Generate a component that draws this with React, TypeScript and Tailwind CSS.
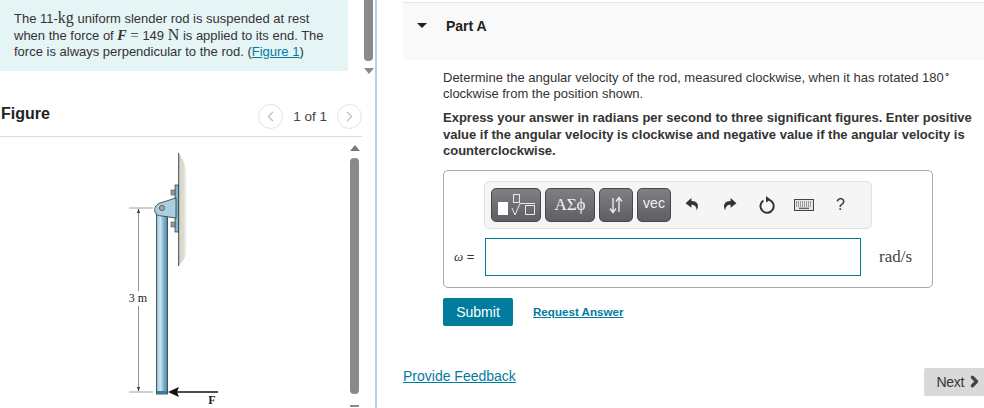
import { ChevronLeft, ChevronRight } from 'lucide-react';

const serif = "font-['Liberation_Serif',serif]";

function RodFigure() {
  return (
    <svg width="120" height="262" viewBox="120 146 120 262" className="block" aria-hidden="true">
      <defs>
        <linearGradient id="rod" x1="0" x2="1" y1="0" y2="0">
          <stop offset="0" stopColor="#8fc0d6" />
          <stop offset="0.35" stopColor="#cfe6ef" />
          <stop offset="0.65" stopColor="#7fb4cd" />
          <stop offset="1" stopColor="#3e8ba9" />
        </linearGradient>
        <linearGradient id="wall" x1="0" x2="1" y1="0" y2="0">
          <stop offset="0" stopColor="#d4d4c8" />
          <stop offset="0.6" stopColor="#dcdcd2" />
          <stop offset="1" stopColor="#ffffff" />
        </linearGradient>
      </defs>
      {/* wall */}
      <path d="M179 154 C184 160 187 168 187 180 L187 245 C187 255 184 261 179 265 Z" fill="url(#wall)" />
      <line x1="178.7" y1="153" x2="178.7" y2="266" stroke="#444" strokeWidth="1" />
      {/* rod */}
      <rect x="156.5" y="212" width="11" height="182" fill="url(#rod)" stroke="#333" strokeWidth="0.8" />
      <rect x="157" y="391" width="10" height="3" fill="#2f7f9d" />
      {/* bracket */}
      <rect x="175" y="185" width="3.5" height="47" fill="#7fb8d0" stroke="#333" strokeWidth="0.7" />
      <path d="M176 198 L160 203 C155 205 154 209 155 212 C156 215 159 216 162 216 L176 218 Z" fill="#a9d0e0" stroke="#333" strokeWidth="0.8" />
      <circle cx="162" cy="208" r="2.6" fill="#a8a8a8" stroke="#444" strokeWidth="0.7" />
      <rect x="171" y="190" width="4" height="5" fill="#8d9b9f" stroke="#444" strokeWidth="0.5" />
      <rect x="171" y="222" width="4" height="5" fill="#8d9b9f" stroke="#444" strokeWidth="0.5" />
      {/* dimension */}
      <line x1="129" y1="208" x2="153" y2="208" stroke="#888" strokeWidth="0.8" />
      <line x1="129" y1="392" x2="153" y2="392" stroke="#888" strokeWidth="0.8" />
      <line x1="138.5" y1="209" x2="138.5" y2="291" stroke="#666" strokeWidth="0.7" />
      <line x1="138.5" y1="306" x2="138.5" y2="391" stroke="#666" strokeWidth="0.7" />
      <path d="M138.5 208.5 L137 213 L140 213 Z" fill="#333" />
      <path d="M138.5 391.5 L137 387 L140 387 Z" fill="#333" />
      <text x="138" y="302" textAnchor="middle" fontSize="12" fill="#222" fontFamily="Liberation Serif">3 m</text>
      {/* force */}
      <line x1="176" y1="392" x2="218" y2="392" stroke="#111" strokeWidth="1.6" />
      <path d="M168 392 L179 387 L177 392 L179 397 Z" fill="#111" />
      <text x="212" y="404" textAnchor="middle" fontSize="12" fontWeight="bold" fill="#222" fontFamily="Liberation Serif">F</text>
    </svg>
  );
}

function Toolbar() {
  const btn = "h-[34px] flex items-center justify-center rounded-[5px] border border-[#47464b] bg-gradient-to-b from-[#807f84] to-[#5f5e63] text-[#f2f2f2]";
  return (
    <div className="w-[388px] h-[48px] ml-[40px] flex items-center pl-[6px] rounded-[5px] border border-[#e2e2e2] bg-[#f5f5f5]">
      <div className="flex gap-[4px]">
        <div className={`${btn} w-[50px]`}>
          <svg width="42" height="26" viewBox="0 0 42 26" aria-hidden="true">
            <rect x="3" y="10" width="10" height="13" fill="#fff" />
            <rect x="18.5" y="2.5" width="6" height="8" fill="none" stroke="#e8e8e8" strokeWidth="1" />
            <path d="M17 16 L20 23 L25 11.5 L40 11.5" fill="none" stroke="#e8e8e8" strokeWidth="1" />
            <rect x="30.5" y="13.5" width="9" height="9" fill="none" stroke="#e8e8e8" strokeWidth="1" />
          </svg>
        </div>
        <div className={`${btn} w-[50px] ${serif} text-[17px]`}>ΑΣϕ</div>
        <div className={`${btn} w-[34px]`}>
          <svg width="16" height="18" viewBox="0 0 16 18" fill="none" stroke="#e8e8e8" strokeWidth="1.4" aria-hidden="true">
            <path d="M5 2 V16 M2 12.5 L5 16.5 L8 12.5" />
            <path d="M11 16 V2 M8 5.5 L11 1.5 L14 5.5" />
          </svg>
        </div>
        <div className={`${btn} w-[34px] text-[14px] pb-[3px]`}>vec</div>
      </div>
      <div className="flex items-center ml-[14px]">
        <svg width="15" height="15" viewBox="0 0 14 14" fill="#333" aria-hidden="true">
          <path d="M6 1 L0.5 5.8 L6 10 L6 7.2 C8.8 7.2 10.6 8.6 11 12.5 C13.2 8.2 12.2 3.8 6 3.8 Z" />
        </svg>
        <svg className="ml-[22px]" width="15" height="15" viewBox="0 0 14 14" fill="#333" aria-hidden="true">
          <path d="M8 1 L13.5 5.8 L8 10 L8 7.2 C5.2 7.2 3.4 8.6 3 12.5 C0.8 8.2 1.8 3.8 8 3.8 Z" />
        </svg>
        <svg className="ml-[21px]" width="18" height="20" viewBox="0 0 18 20" fill="none" aria-hidden="true">
          <path d="M11 4.8 A6.6 6.6 0 1 1 5.4 5.6" stroke="#333" strokeWidth="2" />
          <path d="M8 1 L12.5 4.6 L8 7.6 Z" fill="#333" />
        </svg>
        <svg className="ml-[18px]" width="20" height="12" viewBox="0 0 20 12" aria-hidden="true">
          <rect x="0.5" y="0.5" width="19" height="11" fill="#e6e6e6" stroke="#444" />
          <path d="M2 3 H18 M2 5 H18 M2 7 H18" stroke="#555" strokeWidth="1" strokeDasharray="1 1" />
          <path d="M5 9.3 H15" stroke="#555" strokeWidth="1.2" />
        </svg>
        <span className="ml-[22px] text-[16px] text-[#333]">?</span>
      </div>
    </div>
  );
}

export default function App() {
  return (
    <div className="w-[984px] h-[408px] overflow-hidden flex bg-white text-[#333] font-['Liberation_Sans',Arial,sans-serif] text-[14px] leading-[16px]">
      {/* left pane */}
      <div className="w-[377px] shrink-0 flex flex-col border-r-2 border-[#bccfe2]">
        <div className="h-[97px] flex shrink-0">
          <div className="w-[348px] h-[71px] bg-[#e5f5f6] pl-[14px] pt-[10px] text-[13px]">
            <p>
              The 11-<span className={`${serif} text-[16px]`}>kg</span> uniform slender rod is suspended at rest<br />
              when the force of <span className={`${serif} italic font-bold text-[14px]`}>F</span> <span className={`${serif} text-[15px]`}>=</span> 149 <span className={`${serif} text-[16px]`}>N</span> is applied to its end. The<br />
              force is always perpendicular to the rod. (<a href="#fig" className="text-[#007c9e] underline">Figure 1</a>)
            </p>
          </div>
          <div className="ml-[16px] w-[9px] flex flex-col items-center">
            <div className="w-[9px] h-[61px] rounded-b-[4px] bg-[#8a8a8a]" />
            <div className="mt-[7px] w-0 h-0 border-x-[5px] border-x-transparent border-t-[6px] border-t-[#8a8a8a]" />
          </div>
        </div>
        <div className="w-[362px] h-[40px] flex items-center justify-between border-b border-[#dcdcdc] pl-[1px] pb-[5px]">
          <h2 className="text-[16px] font-bold text-[#222]">Figure</h2>
          <div className="flex items-center gap-[10px] pt-[5px]">
            <span className="w-[25px] h-[25px] rounded-full border border-[#e2e2e2] flex items-center justify-center">
              <ChevronLeft size={17} strokeWidth={2} className="text-[#c4c4c4]" />
            </span>
            <span className="text-[13.5px] text-[#444]">1 of 1</span>
            <span className="w-[25px] h-[25px] rounded-full border border-[#e2e2e2] flex items-center justify-center">
              <ChevronRight size={17} strokeWidth={2} className="text-[#c4c4c4]" />
            </span>
          </div>
        </div>
        <div className="flex flex-1 min-h-0">
          <div className="w-[350px] pt-[9px] pl-[120px]">
            <RodFigure />
          </div>
          <div className="w-[9px] flex flex-col items-center pt-[8px]">
            <div className="w-0 h-0 border-x-[5px] border-x-transparent border-b-[6px] border-b-[#7a7a7a]" />
            <div className="mt-[7px] w-[9px] h-[236px] rounded-[4px] bg-[#8a8a8a]" />
            <div className="mt-[11px] w-[9px] h-[2px] bg-[#8a8a8a]" />
          </div>
        </div>
      </div>

      {/* right pane */}
      <div className="flex-1 min-w-0 pl-[26px] pt-[2px]">
        <div className="h-[58px] flex items-center bg-[#f9f9f9] border-t border-[#e6e6e6] pb-[12px]">
          <div className="ml-[14px] w-0 h-0 border-x-[5px] border-x-transparent border-t-[5px] border-t-[#222]" />
          <h3 className="ml-[19px] font-bold text-[#222]">Part A</h3>
        </div>
        <div className="pl-[40px] pt-[10px]">
          <p className="text-[13px] text-[#333]">
            Determine the angular velocity of the rod, measured clockwise, when it has rotated 180<sup className="text-[10px] leading-none">∘</sup><br />
            clockwise from the position shown.
          </p>
          <p className="mt-[8px] w-[530px] text-[13px] font-bold leading-[16.5px]">
            Express your answer in radians per second to three significant figures. Enter positive value if the angular velocity is clockwise and negative value if the angular velocity is counterclockwise.
          </p>
          <div className="mt-[10px] w-[490px] h-[118px] rounded-[5px] border border-[#aaa] pt-[10px]">
            <Toolbar />
            <div className="mt-[9px] flex items-center">
              <span className="w-[41px] pl-[10px] text-[13px]"><i className={serif}>ω</i> =</span>
              <div className="w-[376px] h-[38px] border border-[#007c9e]" />
              <span className={`ml-[18px] ${serif} text-[17px] text-[#444]`}>rad/s</span>
            </div>
          </div>
          <div className="mt-[10px] flex items-center">
            <button type="button" className="w-[70px] h-[28px] rounded-[2px] bg-[#007c9e] text-white">Submit</button>
            <a href="#answer" className="ml-[20px] text-[11.6px] font-bold text-[#007c9e] underline">Request Answer</a>
          </div>
        </div>
        <div className="pt-[42px] flex items-start justify-between">
          <a href="#feedback" className="text-[#007c9e] underline">Provide Feedback</a>
          <div className="w-[60px] h-[28px] flex items-center justify-end gap-[2px] rounded-l-[2px] bg-[#d9d9d9] pr-[1px] text-[#333]">
            <span className="tracking-[-0.3px]">Next</span>
            <ChevronRight size={17} strokeWidth={4.5} className="text-[#444]" />
          </div>
        </div>
      </div>
    </div>
  );
}
